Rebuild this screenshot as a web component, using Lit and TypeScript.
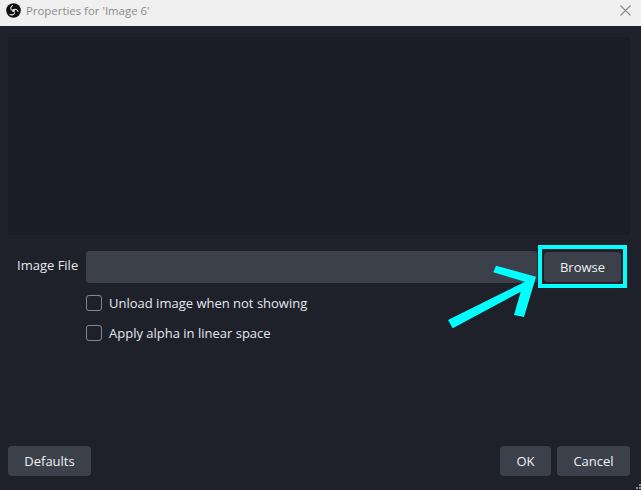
import { LitElement, html, css, svg } from "lit";
import { customElement } from "lit/decorators.js";

@customElement("app-root")
export class AppRoot extends LitElement {
  static styles = css`
    :host {
      display: block;
      width: 641px;
      height: 490px;
      position: relative;
      overflow: hidden;
      background: #1e212a;
      font-family: "Open Sans", "Noto Sans", sans-serif;
      font-size: 13px;
      color: #e6e8ee;
    }
    .titlebar {
      height: 26px;
      box-sizing: border-box;
      background: #f0f0f0;
      display: flex;
      align-items: center;
      padding: 0 10px 6px 6px;
      gap: 5px;
      color: #8a8a8a;
      font-size: 11.4px;
    }
    .titlebar .title { flex: 1; }
    .titlebar svg { display: block; }
    .body {
      height: 464px;
      box-sizing: border-box;
      padding: 11px 11px 14px 8px;
      display: flex;
      flex-direction: column;
    }
    .preview { height: 198px; background: #1a1d28; }
    .row {
      margin: 16px 9px 0 0;
      display: flex;
      gap: 8px;
      align-items: stretch;
      height: 32px;
    }
    .label {
      width: 70px;
      box-sizing: border-box;
      padding: 0 0 4px 9px;
      align-self: center;
      white-space: nowrap;
    }
    .input {
      flex: 1;
      background: #3c404b;
      border-radius: 3px;
      margin-right: -1px;
    }
    .btn {
      background: #3c404b;
      border-radius: 4px;
      display: flex;
      align-items: center;
      justify-content: center;
      color: #eef0f5;
      box-sizing: border-box;
    }
    .browse { width: 77px; margin: 1px 0; }
    .checks {
      margin: 11px 0 0 78px;
      display: flex;
      flex-direction: column;
      gap: 12px;
    }
    .check {
      display: flex;
      align-items: center;
      gap: 7px;
      height: 18px;
    }
    .box {
      width: 16px;
      height: 16px;
      box-sizing: border-box;
      border: 1px solid #85878e;
      border-radius: 3px;
    }
    .footer {
      margin-top: auto;
      display: flex;
      height: 30px;
      gap: 6px;
    }
    .footer .spacer { flex: 1; }
    .defaults { width: 83px; }
    .ok { width: 51px; }
    .cancel { width: 73px; }
    .highlight {
      position: absolute;
      left: 538px;
      top: 245px;
      width: 89px;
      height: 43px;
      box-sizing: border-box;
      border: 4px solid #00ffff;
    }
    .arrow { position: absolute; left: 0; top: 0; pointer-events: none; }
    .grip { position: absolute; right: 0; bottom: 0; }
  `;

  render() {
    return html`
      <div class="titlebar">
        <svg width="15" height="15" viewBox="0 0 16 16">
          <circle cx="8" cy="8" r="7.8" fill="#111"></circle>
          <path d="M7.2 2.6C5 3.4 4.4 6.2 6 7.8" stroke="#e8e8e8" stroke-width="1.1" fill="none"></path>
          <path d="M13 9.4C12.4 7 9.8 6 8 7.3" stroke="#e8e8e8" stroke-width="1.1" fill="none"></path>
          <path d="M4 12C6 13.4 8.8 12.4 9.4 10" stroke="#e8e8e8" stroke-width="1.1" fill="none"></path>
          <circle cx="8" cy="8" r="1.6" fill="#e8e8e8"></circle>
        </svg>
        <span class="title">Properties for 'Image 6'</span>
        <svg width="11" height="11" viewBox="0 0 11 11">
          <path d="M.5.5l10 10M10.5.5l-10 10" stroke="#8c8c8c" stroke-width="1.1" fill="none"></path>
        </svg>
      </div>
      <div class="body">
        <div class="preview"></div>
        <div class="row">
          <div class="label">Image File</div>
          <div class="input"></div>
          <div class="btn browse">Browse</div>
        </div>
        <div class="checks">
          <div class="check"><span class="box"></span><span>Unload image when not showing</span></div>
          <div class="check"><span class="box"></span><span>Apply alpha in linear space</span></div>
        </div>
        <div class="footer">
          <div class="btn defaults">Defaults</div>
          <div class="spacer"></div>
          <div class="btn ok">OK</div>
          <div class="btn cancel">Cancel</div>
        </div>
      </div>
      <div class="highlight"></div>
      <svg class="arrow" width="641" height="490" viewBox="0 0 641 490">
        ${svg`<path d="M448 320L525 281.7L493.3 272.3L496 265.7L536 276.7L524 317L514 315L520.7 291.7L452.7 328.3Z" fill="#00ffff"></path>`}
      </svg>
      <svg class="grip" width="6" height="6" viewBox="0 0 6 6">
        <path d="M4 0h2v2H4zM1 3h2v2H1zM4 3h2v2H4z" fill="#8a8c92"></path>
      </svg>
    `;
  }
}
